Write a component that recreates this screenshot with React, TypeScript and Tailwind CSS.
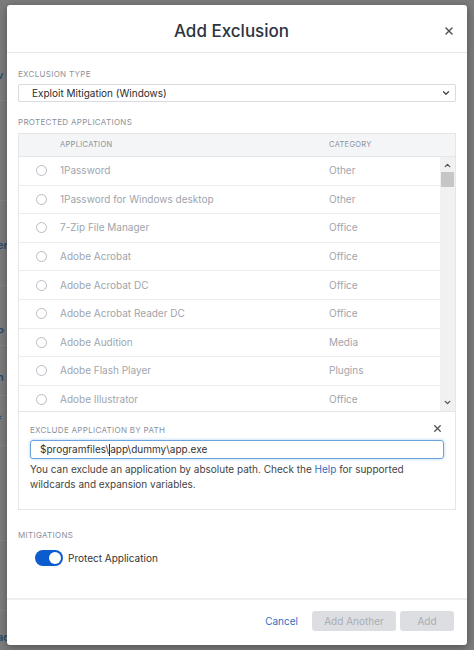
import { X, ChevronDown, ChevronUp } from 'lucide-react'

const apps = [
  { name: '1Password', category: 'Other' },
  { name: '1Password for Windows desktop', category: 'Other' },
  { name: '7-Zip File Manager', category: 'Office' },
  { name: 'Adobe Acrobat', category: 'Office' },
  { name: 'Adobe Acrobat DC', category: 'Office' },
  { name: 'Adobe Acrobat Reader DC', category: 'Office' },
  { name: 'Adobe Audition', category: 'Media' },
  { name: 'Adobe Flash Player', category: 'Plugins' },
  { name: 'Adobe Illustrator', category: 'Office' },
]

// bits of the page behind the overlay
const behind = [
  { top: 68, text: 'v' },
  { top: 238, text: 'er' },
  { top: 325, text: 'P' },
  { top: 370, text: 'n' },
  { top: 413, text: 'f' },
  { top: 630, text: 'ac' },
]

export default function App() {
  return (
    <div className="relative w-[474px] h-[650px] overflow-hidden bg-[#7c7c7c] font-['Inter',sans-serif]">
      {/* page behind the overlay */}
      <div className="absolute inset-0">
        {[100, 200, 285, 345, 395, 445, 540, 610].map(y => (
          <div key={y} className="absolute left-0 w-[7px] h-px bg-[#858585]" style={{ top: y }} />
        ))}
        {behind.map(b => (
          <span
            key={b.top}
            className="absolute left-[-3px] text-[11px] font-semibold text-[#2a4a6e] leading-[14px]"
            style={{ top: b.top }}
          >
            {b.text}
          </span>
        ))}
      </div>

      {/* dialog */}
      <div className="absolute left-[7px] top-[5px] w-[460px] h-[640px] bg-white rounded-[3px] shadow-[0_2px_8px_rgba(0,0,0,0.35)] flex flex-col">
        <div className="h-[48px] shrink-0 border-b border-[#e6e8eb] relative flex items-center justify-center pt-[7px] pr-[11px]">
          <h1 className="text-[17px] font-medium text-[#2b3440]">Add Exclusion</h1>
          <X size={12} strokeWidth={3} className="absolute right-[12px] top-[20px] text-[#555]" />
        </div>

        <div className="flex-1 px-[11px] pt-[16px]">
          <div className="text-[8px] leading-[11px] tracking-[0.3px] text-[#8b9099]">EXCLUSION TYPE</div>
          <div className="mt-[4px] h-[18px] border border-[#d8dbdf] rounded-[2px] flex items-center pr-[4px]">
            <span className="ml-[13px] flex-1 text-[10px] text-[#2c2c2c]">Exploit Mitigation (Windows)</span>
            <ChevronDown size={10} strokeWidth={3} className="text-[#444]" />
          </div>

          <div className="mt-[15px] text-[8px] leading-[11px] tracking-[0.3px] text-[#8b9099]">PROTECTED APPLICATIONS</div>

          <div className="mt-[5px] border border-[#e4e6e9]">
            {/* table */}
            <div className="h-[23px] bg-[#f4f5f7] border-b border-[#e4e6e9] flex items-center text-[7.5px] tracking-[0.3px] text-[#8b9099]">
              <span className="ml-[41px] w-[269px]">APPLICATION</span>
              <span>CATEGORY</span>
            </div>
            <div className="h-[254px] overflow-hidden flex">
              <div className="flex-1">
                {apps.map(a => (
                  <div key={a.name} className="h-[28.6px] border-b border-[#eaecef] flex items-center text-[10px] text-[#a0a5ab]">
                    <span className="ml-[17px] w-[11px] h-[11px] rounded-full border border-[#b8bcc1] shrink-0" />
                    <span className="ml-[13px] w-[269px]">{a.name}</span>
                    <span>{a.category}</span>
                  </div>
                ))}
              </div>
              <div className="w-[15px] bg-[#f1f1f1] relative">
                <ChevronUp size={9} strokeWidth={3.5} className="absolute left-[3px] top-[4px] text-[#505050]" />
                <div className="absolute left-[1px] right-[1px] top-[15px] h-[15px] bg-[#c6c6c6]" />
                <ChevronDown size={9} strokeWidth={3.5} className="absolute left-[3px] bottom-[4px] text-[#505050]" />
              </div>
            </div>

            {/* exclude by path */}
            <div className="h-[98px] border-t border-[#e4e6e9] px-[11px] pt-[13px] relative">
              <div className="text-[8px] leading-[11px] tracking-[0.3px] text-[#8b9099]">EXCLUDE APPLICATION BY PATH</div>
              <X size={11} strokeWidth={3} className="absolute right-[12px] top-[11px] text-[#555]" />
              <div className="mt-[4px] h-[19px] border border-[#6aa3dc] rounded-[3px] shadow-[0_0_3px_rgba(80,150,220,0.5)] flex items-center pl-[9px] text-[10px] text-[#333]">
                <span>$programfiles\</span>
                <span className="w-px h-[12px] bg-[#333]" />
                <span>app\dummy\app.exe</span>
              </div>
              <p className="mt-[3px] text-[10px] leading-[15px] text-[#444]">
                You can exclude an application by absolute path. Check the <span className="text-[#2f6fc0]">Help</span> for supported wildcards and expansion variables.
              </p>
            </div>
          </div>

          <div className="mt-[20px] text-[8px] leading-[11px] tracking-[0.3px] text-[#8b9099]">MITIGATIONS</div>
          <div className="mt-[9px] ml-[17px] flex items-center gap-[5px]">
            <div className="w-[28px] h-[16px] rounded-full bg-[#0b5ccf] flex items-center justify-end pr-[2px]">
              <div className="w-[12px] h-[12px] rounded-full bg-white" />
            </div>
            <span className="text-[10px] text-[#333]">Protect Application</span>
          </div>
        </div>

        <div className="h-[47px] shrink-0 border-t-[2px] border-[#eceef0] flex items-center justify-end pr-[13px] pb-[3px]">
          <span className="text-[10px] text-[#2f6fc0] mr-[14px]">Cancel</span>
          <div className="w-[84px] h-[20px] rounded-[3px] bg-[#dcdee1] text-[10px] text-[#a9adb3] flex items-center justify-center">Add Another</div>
          <div className="ml-[4px] w-[54px] h-[20px] rounded-[3px] bg-[#dcdee1] text-[10px] text-[#a9adb3] flex items-center justify-center">Add</div>
        </div>
      </div>
    </div>
  )
}
